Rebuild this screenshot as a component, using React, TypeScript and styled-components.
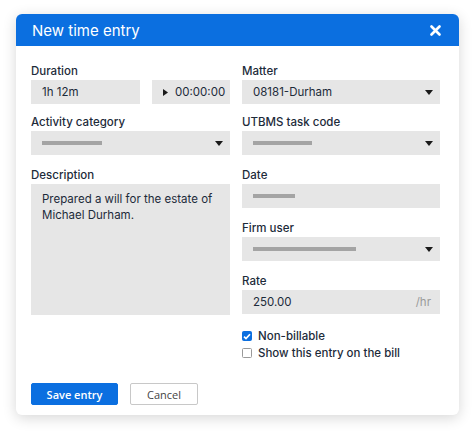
import React from 'react';
import styled, { createGlobalStyle } from 'styled-components';

const GlobalStyle = createGlobalStyle`
	body {
		margin: 0;
		background: #ffffff;
		font-family: 'Inter', 'Open Sans', sans-serif;
		color: #1d2b3a;
	}
`;

const Caret = () => (
	<Icon width='8' height='5' viewBox='0 0 8 5'>
		<path d='M0 0 L8 0 L4 5 Z' fill='#1a1a1a' />
	</Icon>
);

const Field = ({ label, children }: { label: string; children: React.ReactNode }) => (
	<FieldWrap>
		<Label>{label}</Label>
		{children}
	</FieldWrap>
);

const SelectBox = ({ text, bar }: { text?: string; bar?: number }) => (
	<Select>
		{text ? <InputText>{text}</InputText> : <Bar $width={bar || 60} />}
		<Caret />
	</Select>
);

const App = () => {
	return (
		<>
			<GlobalStyle />
			<Page>
				<Card>
					<Header>
						<Title>New time entry</Title>
						<Icon width='11' height='11' viewBox='0 0 11 11'>
							<path d='M1.5 1.5 L9.5 9.5 M9.5 1.5 L1.5 9.5' stroke='#fff' strokeWidth='2.6' strokeLinecap='round' />
						</Icon>
					</Header>
					<Body>
						<Grid>
							<Field label='Duration'>
								<DurationRow>
									<Input>
										<InputText>1h 12m</InputText>
									</Input>
									<Timer>
										<Icon width='5' height='7' viewBox='0 0 5 7'>
											<path d='M0 0 L5 3.5 L0 7 Z' fill='#1a1a1a' />
										</Icon>
										<InputText>00:00:00</InputText>
									</Timer>
								</DurationRow>
							</Field>
							<Field label='Matter'>
								<SelectBox text='08181-Durham' />
							</Field>
						</Grid>
						<Grid $top={10}>
							<Field label='Activity category'>
								<SelectBox bar={60} />
							</Field>
							<Field label='UTBMS task code'>
								<SelectBox bar={59} />
							</Field>
						</Grid>
						<Grid $top={12}>
							<Field label='Description'>
								<TextArea>
									Prepared a will for the estate of
									<br />
									Michael Durham.
								</TextArea>
							</Field>
							<Stack>
								<Field label='Date'>
									<Input>
										<Bar $width={42} />
									</Input>
								</Field>
								<Field label='Firm user'>
									<SelectBox bar={103} />
								</Field>
								<Field label='Rate'>
									<Input>
										<InputText>250.00</InputText>
										<Unit>/hr</Unit>
									</Input>
								</Field>
							</Stack>
						</Grid>
						<Grid $top={13}>
							<div />
							<Checks>
								<CheckRow>
									<Box $checked>
										<Icon width='8' height='7' viewBox='0 0 8 7'>
											<path d='M1 3.6 L3 5.6 L7 1.2' stroke='#fff' strokeWidth='1.7' fill='none' />
										</Icon>
									</Box>
									Non-billable
								</CheckRow>
								<CheckRow>
									<Box />
									Show this entry on the bill
								</CheckRow>
							</Checks>
						</Grid>
						<Actions>
							<Button $primary>Save entry</Button>
							<Button>Cancel</Button>
						</Actions>
					</Body>
				</Card>
			</Page>
		</>
	);
};
export default App;

const Page = styled.div`
	width: 474px;
	height: 434px;
	padding: 14px 0 0 16px;
	box-sizing: border-box;
`;

const Card = styled.div`
	width: 443px;
	height: 401px;
	border-radius: 6px;
	overflow: hidden;
	background: #ffffff;
	box-shadow: 0 3px 14px rgba(0, 0, 0, 0.16);
`;

const Header = styled.div`
	height: 32px;
	background: #0b6fe0;
	display: flex;
	align-items: center;
	justify-content: space-between;
	padding: 0 18px 0 16px;
`;

const Title = styled.div`
	color: #ffffff;
	font-size: 15px;
	font-weight: 400;
`;

const Icon = styled.svg`
	flex-shrink: 0;
	display: block;
`;

const Body = styled.div`
	padding: 17px 18px 0 15px;
`;

const Grid = styled.div<{ $top?: number }>`
	display: grid;
	grid-template-columns: 199px 198px;
	column-gap: 12px;
	margin-top: ${(p) => p.$top || 0}px;
`;

const FieldWrap = styled.div`
	display: flex;
	flex-direction: column;
`;

const Label = styled.div`
	font-size: 11.5px;
	font-weight: 500;
	line-height: 16px;
	height: 17px;
	color: #1d2b3a;
`;

const Input = styled.div`
	height: 24px;
	background: #e6e6e6;
	display: flex;
	align-items: center;
	justify-content: space-between;
	padding: 0 9px 0 11px;
	box-sizing: border-box;
`;

const Select = styled(Input)`
	padding-right: 7px;
`;

const DurationRow = styled.div`
	display: grid;
	grid-template-columns: 109px 78px;
	column-gap: 12px;
`;

const Timer = styled(Input)`
	justify-content: flex-start;
	gap: 7px;
	padding: 0 0 0 11px;
`;

const InputText = styled.span`
	font-size: 11.5px;
	color: #1d2b3a;
	white-space: nowrap;
`;

const Unit = styled.span`
	font-size: 11.5px;
	color: #9a9a9a;
`;

const Bar = styled.span<{ $width: number }>`
	display: block;
	width: ${(p) => p.$width}px;
	height: 4px;
	background: #a4a4a4;
`;

const TextArea = styled.div`
	height: 131px;
	background: #e6e6e6;
	padding: 7px 11px;
	box-sizing: border-box;
	font-size: 11.5px;
	line-height: 16px;
	color: #1d2b3a;
`;

const Stack = styled.div`
	display: flex;
	flex-direction: column;
	gap: 12px;
`;

const Checks = styled.div`
	display: flex;
	flex-direction: column;
	gap: 1px;
`;

const CheckRow = styled.div`
	display: flex;
	align-items: center;
	gap: 6px;
	height: 16px;
	font-size: 11.5px;
	font-weight: 500;
	color: #1d2b3a;
`;

const Box = styled.span<{ $checked?: boolean }>`
	width: 10px;
	height: 10px;
	border-radius: 1.5px;
	display: flex;
	align-items: center;
	justify-content: center;
	box-sizing: border-box;
	background: ${(p) => (p.$checked ? '#0b6fe0' : '#ffffff')};
	border: 1px solid ${(p) => (p.$checked ? '#0b6fe0' : '#9a9a9a')};
`;

const Actions = styled.div`
	display: flex;
	gap: 12px;
	margin-top: 22px;
`;

const Button = styled.button<{ $primary?: boolean }>`
	height: 22px;
	padding: 0;
	width: ${(p) => (p.$primary ? '87px' : '68px')};
	font-family: 'Open Sans', 'Lato', sans-serif;
	font-size: 11px;
	font-weight: ${(p) => (p.$primary ? 600 : 400)};
	color: ${(p) => (p.$primary ? '#ffffff' : '#444444')};
	background: ${(p) => (p.$primary ? '#0b6fe0' : '#ffffff')};
	border: 1px solid ${(p) => (p.$primary ? '#0b6fe0' : '#c8c8c8')};
	border-radius: 2px;
`;
